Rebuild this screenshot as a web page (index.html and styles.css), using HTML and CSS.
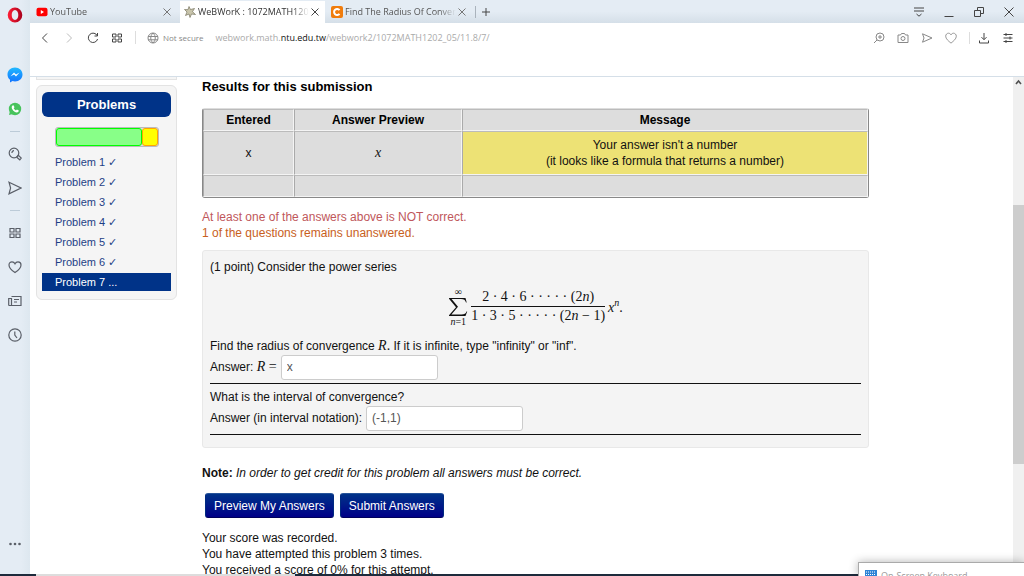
FILE: index.html
```html
<!DOCTYPE html>
<html lang="en">
<head>
    <meta charset="UTF-8">
    <meta name="viewport" content="width=device-width, initial-scale=1.0">
    <title>WeBWorK : 1072MATH1202_05 : 11.8 : 7</title>
    <link rel="stylesheet" href="styles.css">
</head>
<body>
    <aside class="dock">
        <button class="logo" aria-label="Menu"><svg width="16" height="16" viewBox="0 0 16 16"><defs><linearGradient id="red" x1="0" x2="1"><stop offset="0" stop-color="#ff2036"/><stop offset="1" stop-color="#a9001c"/></linearGradient></defs><path fill="url(#red)" fill-rule="evenodd" d="M8 .5a7.3 7.5 0 1 0 0 15a7.3 7.5 0 1 0 0-15zM8 3c2 0 3.300 2.300 3.300 5s-1.300 5-3.300 5s-3.300-2.300-3.300-5s1.300-5 3.300-5z"/></svg></button>
        <button class="first" aria-label="Messenger"><svg width="16" height="16" viewBox="0 0 16 16"><defs><linearGradient id="blue" x1="0" x2="0" y1="0" y2="1"><stop offset="0" stop-color="#20b8ff"/><stop offset="1" stop-color="#1373ff"/></linearGradient></defs><path fill="url(#blue)" d="M8 .5C3.700.5.5 3.500.5 7.400c0 2.200.9 4 2.500 5.300v2.800l2.500-1.400c.8.200 1.600.3 2.500.3c4.300 0 7.500-3 7.500-7S12.300.5 8 .5z"/><path fill="#fff" d="M3.500 9.300L7 5.600l2 1.800l3.500-1.800L9 9.400L7.100 7.600z"/></svg></button>
        <button aria-label="WhatsApp"><svg width="14" height="14" viewBox="0 0 14 14"><circle cx="7" cy="7" r="6.200" fill="#47c35c"/><path d="M1 13l1-4l3 3z" fill="#47c35c"/><path fill="#fff" d="M4.500 3.500l1-.3l1 2l-.8 1c.5 1 1.200 1.700 2.200 2.200l1-.9l1.900 1c0 1.300-1 2-2 2C6.300 10.200 3.700 7.500 3.700 5.200c0-.8.3-1.300.8-1.700z"/></svg></button>
        <hr>
        <button aria-label="Search"><svg width="14" height="14" viewBox="0 0 14 14"><circle cx="6" cy="6" r="4.800"/><path d="M4 6a2 2 0 0 1 2-2.300M9.200 9.400l1.200-1l2.800 2.600l-1.400 1.800l-2.800-2.300z"/></svg></button>
        <button aria-label="Flow"><svg width="14" height="14" viewBox="0 0 14 14"><path d="M1 1.200l12 5.800l-12 5.800L2.600 7z"/></svg></button>
        <hr>
        <button aria-label="Speed dial"><svg width="14" height="14" viewBox="0 0 14 14"><path d="M2 2.500h4v3.500h-4zM8 2.500h4v3.500h-4zM2 8h4v3.500h-4zM8 8h4v3.500h-4z"/></svg></button>
        <button aria-label="Bookmarks"><svg width="14" height="14" viewBox="0 0 14 14"><path d="M7 12.600C4 10.500 1 8 1 4.900C1 2.900 2.400 1.800 4 1.800c1.300 0 2.400.8 3 2c.6-1.200 1.700-2 3-2c1.600 0 3 1.100 3 3.100c0 3.100-3 5.600-6 7.700z"/></svg></button>
        <button aria-label="News"><svg width="14" height="14" viewBox="0 0 14 14"><path d="M3.500 2.500h9.500v9H1.500q-.8 0-.8-.8V4.500h2.800v7M6 5.500h5M6 8h3"/></svg></button>
        <button aria-label="History"><svg width="14" height="14" viewBox="0 0 14 14"><circle cx="7" cy="7" r="6.200"/><path d="M6.800 3.500V7l2.200 3"/></svg></button>
        <button class="more" aria-label="More"><svg width="14" height="4" viewBox="0 0 14 4"><g fill="#5a5f68" stroke="none"><circle cx="2.500" cy="2" r="1.300"/><circle cx="7" cy="2" r="1.300"/><circle cx="11.500" cy="2" r="1.300"/></g></svg></button>
    </aside>

    <div class="window">
        <div class="tabs">
            <div class="tab">
                <svg width="12" height="10" viewBox="0 0 12 10"><rect x=".5" y=".8" width="11" height="8.400" rx="2" fill="#f00"/><path d="M4.800 3l3.200 2l-3.200 2z" fill="#fff"/></svg>
                <span>YouTube</span>
                <button aria-label="Close tab"><svg width="8" height="8" viewBox="0 0 8 8"><path d="M.5.5l7 7M7.500.5l-7 7"/></svg></button>
            </div>
            <div class="tab active">
                <svg width="12" height="12" viewBox="0 0 12 12"><path d="M5 .5l1.500 3l4-1l-2 3.200l3 2.800l-4-.5L6 11.500L5 8L1.500 9.500L3 6L.5 3.500l3.500.2z" fill="#c9c5ac" stroke="#77745f" stroke-width=".7"/></svg>
                <span>WeBWorK : 1072MATH120</span>
                <button aria-label="Close tab"><svg width="8" height="8" viewBox="0 0 8 8"><path d="M.5.5l7 7M7.500.5l-7 7"/></svg></button>
            </div>
            <div class="tab">
                <svg width="12" height="12" viewBox="0 0 12 12"><rect width="12" height="12" rx="2" fill="#f07c0c"/><path d="M8.500 4.200A3 3 0 1 0 8.500 7.800" fill="none" stroke="#fff" stroke-width="2"/></svg>
                <span>Find The Radius Of Conver</span>
                <button aria-label="Close tab"><svg width="8" height="8" viewBox="0 0 8 8"><path d="M.5.5l7 7M7.500.5l-7 7"/></svg></button>
            </div>
            <button class="new-tab" aria-label="New tab"><svg width="10" height="10" viewBox="0 0 10 10"><path d="M5 1v8M1 5h8"/></svg></button>
            <div class="controls">
                <button aria-label="Tab menu"><svg width="12" height="12" viewBox="0 0 12 12"><path d="M1 2h10M1 5h10M3.500 8L6 10.200L8.500 8"/></svg></button>
                <button aria-label="Minimize"><svg width="12" height="12" viewBox="0 0 12 12"><path d="M1.500 10.500h9"/></svg></button>
                <button aria-label="Restore"><svg width="12" height="12" viewBox="0 0 12 12"><path d="M1.500 4.500h6v6h-6zM4.500 4V1.500h6v6H8"/></svg></button>
                <button aria-label="Close"><svg width="12" height="12" viewBox="0 0 12 12"><path d="M1.500 1.500l9 9M10.500 1.500l-9 9"/></svg></button>
            </div>
        </div>

        <div class="toolbar">
            <button aria-label="Back"><svg width="12" height="12" viewBox="0 0 12 12"><path d="M8 1.500L3.500 6L8 10.500"/></svg></button>
            <button class="off" aria-label="Forward"><svg width="12" height="12" viewBox="0 0 12 12"><path d="M4 1.500L8.500 6L4 10.500"/></svg></button>
            <button aria-label="Reload"><svg width="12" height="12" viewBox="0 0 12 12"><path d="M10.300 3.800A4.700 4.700 0 1 0 10.600 7M10.500 1v3h-3"/></svg></button>
            <button aria-label="Speed dial"><svg width="12" height="12" viewBox="0 0 12 12"><path d="M1.500 2h3.500v3h-3.500zM7 2h3.500v3h-3.500zM1.500 7h3.500v3h-3.500zM7 7h3.500v3h-3.500z"/></svg></button>
            <div class="address">
                <svg width="12" height="12" viewBox="0 0 12 12"><circle cx="6" cy="6" r="5"/><path d="M1 4.500h10M1 7.800h10M6 1c-3 3-3 7 0 10M6 1c3 3 3 7 0 10"/></svg>
                <span>Not secure</span>
                <div class="url">webwork.math.<b>ntu.edu.tw</b>/webwork2/1072MATH1202_05/11.8/7/</div>
            </div>
            <div class="tools">
                <button aria-label="Zoom"><svg width="12" height="12" viewBox="0 0 12 12"><circle cx="7" cy="5" r="4"/><path d="M4 8L1 11M5 5h4M7 3v4"/></svg></button>
                <button aria-label="Snapshot"><svg width="12" height="12" viewBox="0 0 12 12"><path d="M1 3h2.500l1-1.500h3l1 1.500H11v7.500H1z"/><circle cx="6" cy="6.500" r="2"/></svg></button>
                <button aria-label="Send"><svg width="12" height="12" viewBox="0 0 12 12"><path d="M1.500 1.800l9.500 4.200l-9.500 4.200L3 6z"/></svg></button>
                <button aria-label="Save"><svg width="12" height="12" viewBox="0 0 14 14"><path d="M7 13C4 10.500.8 8 .8 4.900C.8 2.900 2.400 1.400 4 1.400c1.300 0 2.400.8 3 2c.6-1.200 1.700-2 3-2c1.600 0 3.200 1.500 3.200 3.500c0 3.100-3.200 5.600-6.200 8.100z"/></svg></button>
                <button class="dark" aria-label="Downloads"><svg width="12" height="12" viewBox="0 0 12 12"><path d="M6 1v6.500M3.500 5.200L6 7.700l2.500-2.500M1.500 8.500v2.500h9V8.500"/></svg></button>
                <button class="dark" aria-label="Easy setup"><svg width="12" height="12" viewBox="0 0 12 12"><path d="M1.500 2.500h9M1.500 6h9M1.500 9.500h9M4 1v3M8 4.500v3M4 8v3"/></svg></button>
            </div>
        </div>

        <div class="page">
            <nav class="side">
                <div class="panel previous"></div>
                <div class="panel">
                    <h2>Problems</h2>
                    <div class="progress"><div class="done"></div><div class="current"></div></div>
                    <ul>
                        <li><a href="#">Problem 1 ✓</a></li>
                        <li><a href="#">Problem 2 ✓</a></li>
                        <li><a href="#">Problem 3 ✓</a></li>
                        <li><a href="#">Problem 4 ✓</a></li>
                        <li><a href="#">Problem 5 ✓</a></li>
                        <li><a href="#">Problem 6 ✓</a></li>
                        <li><a href="#" class="active">Problem 7 ...</a></li>
                    </ul>
                </div>
            </nav>

            <main>
                <h3>Results for this submission</h3>
                <table>
                    <thead>
                        <tr>
                            <th class="entered">Entered</th>
                            <th class="preview">Answer Preview</th>
                            <th>Message</th>
                        </tr>
                    </thead>
                    <tbody>
                        <tr>
                            <td>x</td>
                            <td><i class="math">x</i></td>
                            <td class="warning">Your answer isn't a number<br>(it looks like a formula that returns a number)</td>
                        </tr>
                        <tr class="empty"><td></td><td></td><td></td></tr>
                    </tbody>
                </table>

                <div class="status">
                    <div class="wrong">At least one of the answers above is NOT correct.</div>
                    <div class="unanswered">1 of the questions remains unanswered.</div>
                </div>

                <form id="problem" class="problem">
                    <p>(1 point) Consider the power series</p>
                    <div class="formula math">
                        <div class="sum">
                            <small>∞</small>
                            <svg width="20" height="20" viewBox="0 0 20 20"><path fill="#111" d="M1 1h16.500l1.200 4.500h-.7C17.300 3 16 2 13 2H3.600L10 9.800L3.400 17.600h10.100c3 0 4.200-.8 5-3h.7L17.500 19H1v-.7l7-8L1 1.700z"/></svg>
                            <small><i>n</i>=1</small>
                        </div>
                        <div class="fraction">
                            <div>2 · 4 · 6 · · · · · (2<i>n</i>)</div>
                            <div>1 · 3 · 5 · · · · · (2<i>n</i> − 1)</div>
                        </div>
                        <div><i>x</i><sup><i>n</i></sup>.</div>
                    </div>
                    <p>Find the radius of convergence <span class="math"><i>R</i>.</span> If it is infinite, type "infinity" or "inf".</p>
                    <div class="answer">
                        <label for="radius">Answer: <span class="math"><i>R</i> =</span></label>
                        <input type="text" id="radius" value="x">
                    </div>
                    <hr>
                    <p>What is the interval of convergence?</p>
                    <div class="answer">
                        <label for="interval">Answer (in interval notation):</label>
                        <input type="text" id="interval" value="(-1,1)">
                    </div>
                    <hr>
                </form>

                <p class="note"><b>Note:</b> <i>In order to get credit for this problem all answers must be correct.</i></p>
                <div class="buttons">
                    <button form="problem">Preview My Answers</button>
                    <button form="problem">Submit Answers</button>
                </div>
                <p>Your score was recorded.</p>
                <p>You have attempted this problem 3 times.</p>
                <p>You received a score of 0% for this attempt.</p>
            </main>

            <div class="scrollbar">
                <svg width="11" height="11" viewBox="0 0 11 11"><path d="M3 7l2.500-3L8 7" fill="none" stroke="#505050" stroke-width="1.600"/></svg>
                <div class="thumb"></div>
            </div>
        </div>
    </div>

    <div class="taskbar"></div>
    <div class="keyboard">
        <svg width="12" height="10" viewBox="0 0 12 10"><rect width="12" height="10" fill="#2e83d6"/><path d="M1 2h10M1 4.500h10" stroke="#fff" stroke-dasharray="1 1"/><path d="M3 7.500h6" stroke="#fff"/></svg>
        <span>On-Screen Keyboard</span>
    </div>
</body>
</html>
```
FILE: styles.css
```css
* {
    box-sizing: border-box;
}

body {
    margin: 0;
    display: flex;
    height: 100vh;
    overflow: hidden;
    position: relative;
    background-color: white;
    color: #111;
    font: 12px/16px "Liberation Sans", Arial, sans-serif;
}

button {
    display: flex;
    align-items: center;
    justify-content: center;
    padding: 0;
    border: none;
    background: none;
    cursor: pointer;
}

svg {
    flex-shrink: 0;
}

h2, h3, p {
    margin: 0;
}

/* left dock */
.dock {
    display: flex;
    flex-direction: column;
    align-items: center;
    width: 30px;
    flex-shrink: 0;
    padding-bottom: 20px;
    background: linear-gradient(to right, #e4ecf4 70%, #dde7ef);
}

.dock svg {
    fill: none;
    stroke: #5a5f68;
    stroke-width: 1.2;
}

.dock .logo svg,
.dock .first svg,
.dock .first + button svg {
    stroke: none;
}

.dock button {
    width: 30px;
    height: 34px;
    flex-shrink: 0;
}

.dock .logo {
    height: 30px;
}

.dock .first {
    margin-top: 28px;
}

.dock hr {
    width: 10px;
    margin: 5px 0;
    border: none;
    border-top: 1px solid #bccbd8;
}

.dock .more {
    height: 24px;
    margin-top: auto;
}

/* browser bars */
.window {
    display: flex;
    flex-direction: column;
    flex-grow: 1;
    min-width: 0;
}

.tabs {
    display: flex;
    align-items: center;
    height: 23px;
    flex-shrink: 0;
    background: linear-gradient(#e4ecf4 50%, #d5dfe8);
    font: 9px/12px "Open Sans", "Noto Sans", sans-serif;
    color: #555;
}

.tab {
    display: flex;
    align-items: center;
    gap: 2px;
    width: 150px;
    height: 23px;
    padding: 0 9px 0 6px;
}

.tab.active {
    width: 145px;
    height: 22px;
    align-self: flex-end;
    padding: 0 6px 0 4px;
    background-color: white;
    color: #333;
}

.tab span {
    flex: 1;
    white-space: nowrap;
    mask-image: linear-gradient(to right, black 85%, transparent);
}

.tab button {
    width: 8px;
    height: 12px;
}

.tabs button svg {
    fill: none;
    stroke: #777;
}

.tabs .active button svg,
.tabs .new-tab svg,
.tabs .controls svg {
    stroke: #444;
}

.tabs .new-tab {
    width: 21px;
    height: 12px;
    border-left: 1px solid #aab3bc;
}

.controls {
    display: flex;
    gap: 18px;
    margin-left: auto;
    padding-right: 9px;
}

.toolbar {
    display: flex;
    align-items: center;
    gap: 12px;
    height: 54px;
    flex-shrink: 0;
    padding: 0 10px 24px 9px;
    border-bottom: 1px solid #d5dfe8;
    font: 9px/12px "Open Sans", "Noto Sans", sans-serif;
    color: #888;
}

.toolbar svg {
    fill: none;
    stroke: #444;
}

.toolbar .off svg {
    stroke: #bbb;
}

.address {
    display: flex;
    align-items: center;
    gap: 4px;
    height: 13px;
    padding-left: 11px;
    border-left: 1px solid #ddd;
}

.address svg,
.tools svg {
    stroke: #888;
}

.address span {
    font-size: 8px;
}

.url {
    margin-left: 8px;
    white-space: nowrap;
    color: #aaa;
}

.url b {
    font-weight: normal;
    color: #111;
}

.tools {
    display: flex;
    gap: 12px;
    margin-left: auto;
}

.tools .dark svg {
    stroke: #444;
}

.tools .dark:nth-child(5) {
    padding-left: 8px;
    border-left: 1px solid #ddd;
}

/* page */
.page {
    display: flex;
    flex: 1;
    min-height: 0;
    overflow: hidden;
}

.side {
    width: 141px;
    flex-shrink: 0;
    margin-left: 6px;
    font-size: 11px;
}

.panel {
    padding: 6px 5px 8px;
    border: 1px solid #e3e3e3;
    border-radius: 6px;
    background-color: #f5f5f5;
}

.panel.previous {
    height: 3px;
    margin-bottom: 5px;
    padding: 0;
    border-top: none;
    border-radius: 0;
}

.panel h2 {
    border-radius: 6px;
    background-color: #038;
    color: white;
    font-size: 13px;
    line-height: 25px;
    text-align: center;
}

.progress {
    display: flex;
    height: 20px;
    margin: 10px 12px 6px 13px;
    border: 1px solid #bbb;
    border-radius: 3px;
    background-color: #ddd;
}

.done {
    flex: 6;
    border: 1px solid #0f0;
    border-radius: 3px;
    background-color: #8f8;
}

.current {
    flex: 1;
    border: 1px solid #ffa500;
    border-radius: 3px;
    background-color: #ff0;
}

.panel ul {
    display: flex;
    flex-direction: column;
    gap: 2px;
    margin: 0;
    padding: 0;
    list-style: none;
}

.panel a {
    display: block;
    padding-left: 13px;
    color: #1e3f86;
    line-height: 18px;
    text-decoration: none;
}

.panel a.active {
    background-color: #038;
    color: white;
}

main {
    flex: 1;
    margin: 0 144px 0 25px;
}

h3 {
    color: black;
    font-size: 13px;
    line-height: 20px;
}

table {
    width: 100%;
    margin-top: 11px;
    border: 1px solid;
    border-color: #ddd #888 #888 #888;
    border-radius: 3px;
    border-spacing: 0;
    background-color: #ddd;
    text-align: center;
}

th, td {
    height: 22px;
    padding: 2px;
    border: 1px solid;
    border-color: #bbb #f4f4f4 #f4f4f4 #aaa;
}

th {
    color: black;
}

.entered {
    width: 91px;
}

.preview {
    width: 168px;
}

.warning {
    height: 44px;
    background-color: #ede275;
}

.math {
    font-family: "Liberation Serif", "Times New Roman", serif;
    font-size: 14px;
}

.status {
    margin: 11px 0 9px;
}

.wrong {
    color: #c0575b;
}

.unanswered {
    color: #c8601c;
}

.problem {
    padding: 8px 7px 12px;
    border: 1px solid #e8e8e8;
    border-radius: 3px;
    background-color: #f4f4f4;
}

.formula {
    display: flex;
    align-items: center;
    justify-content: center;
    gap: 3px;
    height: 63px;
}

.sum {
    display: flex;
    flex-direction: column;
    align-items: center;
}

.sum small {
    font-size: 10px;
    line-height: 10px;
}

.fraction {
    text-align: center;
    line-height: 18px;
}

.fraction div + div {
    border-top: 1px solid #111;
}

.formula sup {
    font-size: 10px;
    line-height: 10px;
}

.answer {
    display: flex;
    align-items: center;
    gap: 4px;
    height: 26px;
}

.answer input {
    width: 157px;
    height: 25px;
    padding: 0 5px;
    border: 1px solid #ccc;
    border-radius: 3px;
    background-color: white;
    color: #555;
    font: inherit;
}

.problem hr {
    margin: 3px 0 5px;
    border: none;
    border-top: 1px solid #111;
}

.problem hr:last-child {
    margin-bottom: 0;
}

.note {
    margin-top: 17px;
}

.buttons {
    display: flex;
    gap: 6px;
    margin: 12px 3px;
}

.buttons button {
    height: 25px;
    padding: 0 8px;
    border: 1px solid;
    border-color: #26539a #002a80 #00005c;
    border-radius: 3px;
    background: linear-gradient(#038, #008);
    color: white;
    font: inherit;
}

.scrollbar {
    width: 11px;
    flex-shrink: 0;
    background-color: #f0f0f0;
}

.scrollbar svg {
    display: block;
}

.thumb {
    height: 52%;
    margin-top: 117px;
    background-color: #cdcdcd;
}

/* desktop parts that overlap the browser */
.taskbar {
    position: absolute;
    right: 0;
    bottom: 0;
    left: 0;
    height: 2px;
    background: linear-gradient(to right, #1d2b3c 36px, #ddd 36px, #ddd 295px, #1d2b3c 295px);
}

.keyboard {
    position: absolute;
    right: 0;
    bottom: 0;
    display: flex;
    gap: 4px;
    width: 166px;
    height: 14px;
    padding: 7px 6px 0;
    overflow: hidden;
    border: 1px solid #aaa;
    border-width: 1px 0 0 1px;
    background-color: white;
    box-shadow: 0 0 10px rgba(0, 0, 0, 0.3);
    color: #999;
    font: 9px/12px "Open Sans", "Noto Sans", sans-serif;
}
```
